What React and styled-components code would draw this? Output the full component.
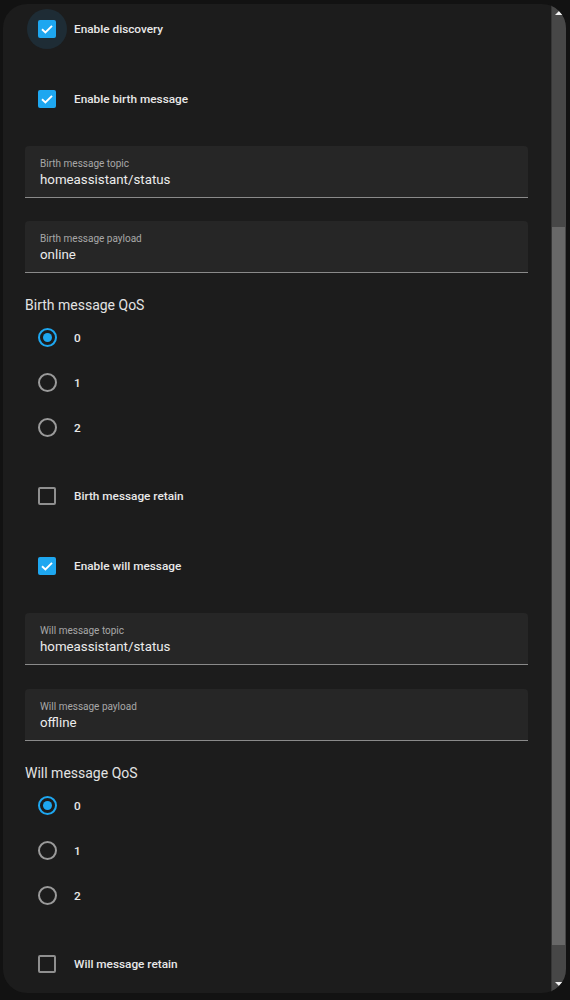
import React from "react";
import styled, { createGlobalStyle, css } from "styled-components";

const Global = createGlobalStyle`
  html, body { margin: 0; padding: 0; background: #121212; }
  body { font-family: Roboto, "Noto Sans", Arial, sans-serif; -webkit-font-smoothing: antialiased; }
  * { box-sizing: border-box; }
`;

const Page = styled.div`
  padding: 4px 4px 7px 3px;
  height: 1000px;
`;

const Panel = styled.div`
  height: 989px;
  background: #1c1c1c;
  border-radius: 24px;
  overflow: hidden;
  display: flex;
`;

const Content = styled.div`
  flex: 1;
  padding: 2px 23px 0 22px;
  display: flex;
  flex-direction: column;
`;

const CheckRow = styled.label`
  height: 46px;
  display: flex;
  align-items: center;
  padding-left: 2px;
  margin-bottom: ${(p) => p.$after ?? 0}px;
`;

const ControlWrap = styled.span`
  width: 40px;
  height: 40px;
  border-radius: 50%;
  display: flex;
  align-items: center;
  justify-content: center;
  background: ${(p) => (p.$focus ? "#1e2c35" : "transparent")};
  margin-right: 7px;
  flex: none;
`;

const Box = styled.span`
  width: 18px;
  height: 18px;
  border-radius: 2px;
  display: flex;
  align-items: center;
  justify-content: center;
  ${(p) =>
    p.$checked
      ? css`background: #1ea7f0;`
      : css`border: 2px solid #8f8f8f;`}
`;

const Radio = styled.span`
  width: 19px;
  height: 19px;
  border-radius: 50%;
  border: 2px solid ${(p) => (p.$checked ? "#1ea7f0" : "#9a9a9a")};
  display: flex;
  align-items: center;
  justify-content: center;
  &::after {
    content: "";
    display: ${(p) => (p.$checked ? "block" : "none")};
    width: 9px;
    height: 9px;
    border-radius: 50%;
    background: #1ea7f0;
  }
`;

const LabelText = styled.span`
  color: #e8e8e8;
  font-size: 11.8px;
  font-weight: 500;
  letter-spacing: 0;
`;

const RadioRow = styled.label`
  height: 45px;
  display: flex;
  align-items: center;
  padding-left: 2px;
  margin-bottom: ${(p) => p.$after ?? 0}px;
`;

const Field = styled.div`
  height: 52px;
  background: #262626;
  border-radius: 4px 4px 0 0;
  border-bottom: 1px solid #8a8a8a;
  padding: 12px 15px 0 15px;
  margin-bottom: ${(p) => p.$after ?? 0}px;
`;

const FieldLabel = styled.div`
  font-size: 10px;
  line-height: 12px;
  color: #a8a8a8;
  margin-bottom: 2px;
`;

const FieldValue = styled.div`
  font-size: 13.3px;
  line-height: 16px;
  color: #ececec;
`;

const Heading = styled.div`
  font-size: 14px;
  line-height: 20px;
  color: #e3e3e3;
`;

const Scrollbar = styled.div`
  width: 15px;
  flex: none;
  background: #474747;
  border-left: 1px solid #363636;
  position: relative;
`;

const Arrow = styled.span`
  position: absolute;
  left: 3px;
  width: 0;
  height: 0;
  border-left: 4px solid transparent;
  border-right: 4px solid transparent;
  ${(p) =>
    p.$down
      ? css`bottom: 7px; border-top: 4px solid #f0f0f0;`
      : css`top: 7px; border-bottom: 4px solid #f0f0f0;`}
`;

const Thumb = styled.div`
  position: absolute;
  left: 0;
  right: 1px;
  background: #686868;
`;

const Check = () => (
  <svg width="14" height="14" viewBox="0 0 14 14">
    <path d="M2 7.3 L5.4 10.5 L12 3.8" fill="none" stroke="#fff" strokeWidth="1.9" />
  </svg>
);

const CheckItem = ({ checked, focus, label, after }) => (
  <CheckRow $after={after}>
    <ControlWrap $focus={focus}>
      <Box $checked={checked}>{checked && <Check />}</Box>
    </ControlWrap>
    <LabelText>{label}</LabelText>
  </CheckRow>
);

const RadioItem = ({ checked, label, after }) => (
  <RadioRow $after={after}>
    <ControlWrap>
      <Radio $checked={checked} />
    </ControlWrap>
    <LabelText>{label}</LabelText>
  </RadioRow>
);

const TextField = ({ label, value, after }) => (
  <Field $after={after}>
    <FieldLabel>{label}</FieldLabel>
    <FieldValue>{value}</FieldValue>
  </Field>
);

export default function App() {
  return (
    <>
      <Global />
      <Page>
        <Panel>
          <Content>
            <CheckItem checked focus label="Enable discovery" after={24} />
            <CheckItem checked label="Enable birth message" after={24} />
            <TextField label="Birth message topic" value="homeassistant/status" after={23} />
            <TextField label="Birth message payload" value="online" after={22} />
            <Heading>Birth message QoS</Heading>
            <RadioItem checked label="0" />
            <RadioItem label="1" />
            <RadioItem label="2" after={23} />
            <CheckItem label="Birth message retain" after={24} />
            <CheckItem checked label="Enable will message" after={24} />
            <TextField label="Will message topic" value="homeassistant/status" after={24} />
            <TextField label="Will message payload" value="offline" after={22} />
            <Heading>Will message QoS</Heading>
            <RadioItem checked label="0" />
            <RadioItem label="1" />
            <RadioItem label="2" after={23} />
            <CheckItem label="Will message retain" />
          </Content>
          <Scrollbar>
            <Arrow />
            <Thumb style={{ top: 223, height: 718 }} />
            <Arrow $down />
          </Scrollbar>
        </Panel>
      </Page>
    </>
  );
}
